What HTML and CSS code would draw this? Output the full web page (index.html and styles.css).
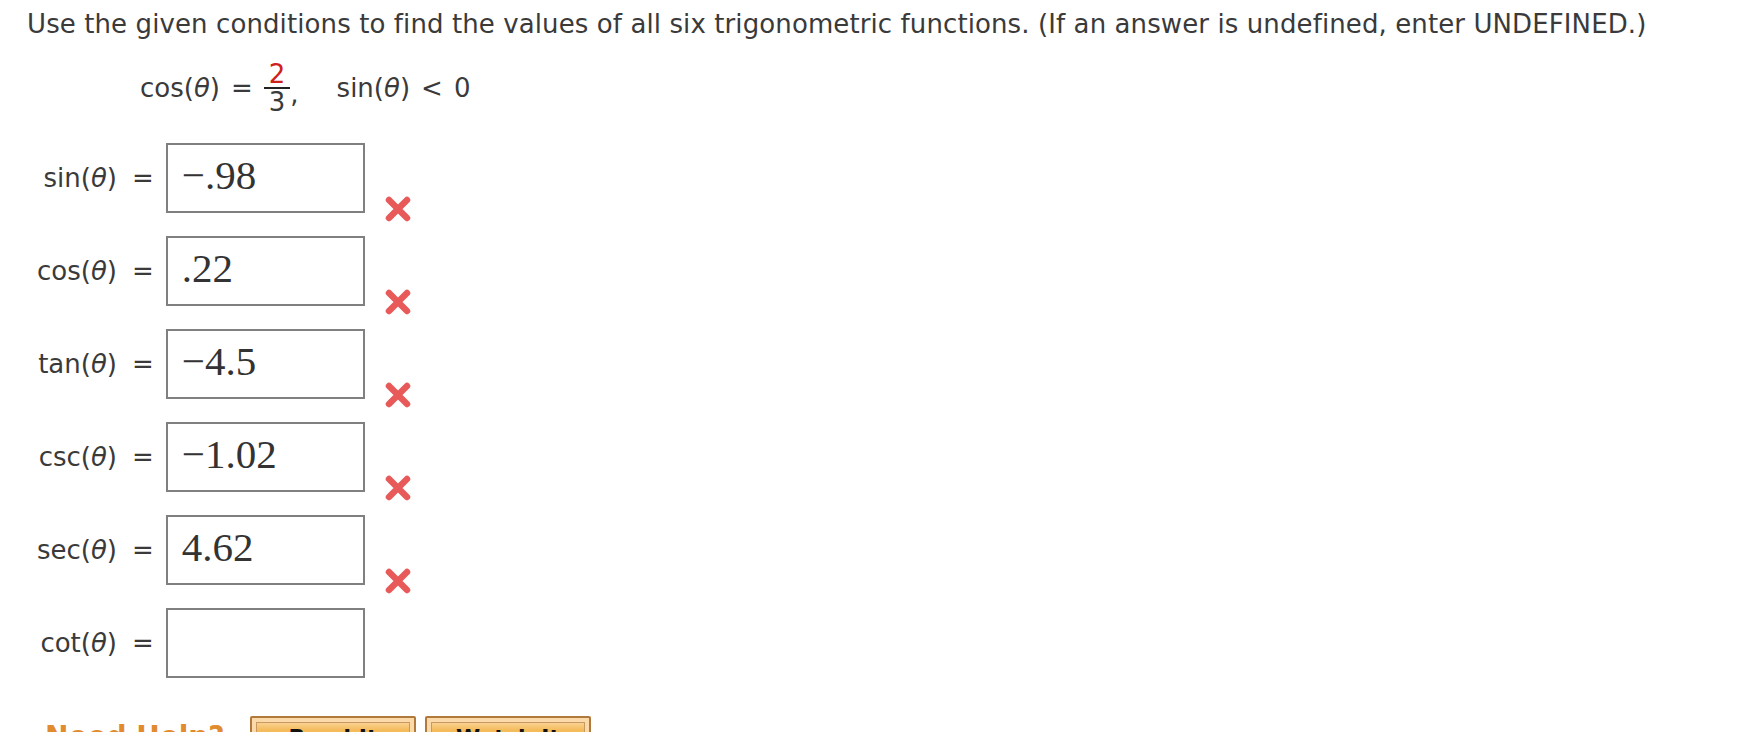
FILE: index.html
```html
<!DOCTYPE html>
<html lang="en">
<head>
    <meta charset="UTF-8">
    <title>Trig Functions</title>
    <link rel="stylesheet" href="styles.css">
</head>
<body>
    <div class="question">
        <p class="prompt">Use the given conditions to find the values of all six trigonometric functions. (If an answer is undefined, enter UNDEFINED.)</p>

        <div class="given">
            <span>cos(<i>θ</i>)</span>
            <span class="op">=</span>
            <span class="frac"><span class="num">2</span><span class="den">3</span></span><span class="comma">,</span>
            <span class="second">sin(<i>θ</i>)</span>
            <span class="op">&lt;</span>
            <span>0</span>
        </div>

        <div class="answers">
            <div class="row">
                <span class="label">sin(<i>θ</i>)</span>
                <span class="eq">=</span>
                <div class="box">−.98</div>
                <svg class="wrong" viewBox="0 0 28 26"><path d="M5 4 L23 22 M23 4 L5 22"/></svg>
            </div>
            <div class="row">
                <span class="label">cos(<i>θ</i>)</span>
                <span class="eq">=</span>
                <div class="box">.22</div>
                <svg class="wrong" viewBox="0 0 28 26"><path d="M5 4 L23 22 M23 4 L5 22"/></svg>
            </div>
            <div class="row">
                <span class="label">tan(<i>θ</i>)</span>
                <span class="eq">=</span>
                <div class="box">−4.5</div>
                <svg class="wrong" viewBox="0 0 28 26"><path d="M5 4 L23 22 M23 4 L5 22"/></svg>
            </div>
            <div class="row">
                <span class="label">csc(<i>θ</i>)</span>
                <span class="eq">=</span>
                <div class="box">−1.02</div>
                <svg class="wrong" viewBox="0 0 28 26"><path d="M5 4 L23 22 M23 4 L5 22"/></svg>
            </div>
            <div class="row">
                <span class="label">sec(<i>θ</i>)</span>
                <span class="eq">=</span>
                <div class="box">4.62</div>
                <svg class="wrong" viewBox="0 0 28 26"><path d="M5 4 L23 22 M23 4 L5 22"/></svg>
            </div>
            <div class="row">
                <span class="label">cot(<i>θ</i>)</span>
                <span class="eq">=</span>
                <div class="box"></div>
            </div>
        </div>

        <div class="help">
            <span class="need">Need Help?</span>
            <button class="help-btn">Read It</button>
            <button class="help-btn">Watch It</button>
        </div>
    </div>
</body>
</html>
```

FILE: styles.css
```css
body {
    margin: 0;
    background: #fff;
    color: #3a3a3a;
    font-family: "DejaVu Sans", Verdana, sans-serif;
    font-size: 26px;
    overflow: hidden;
}
.question {
    padding-left: 27px;
}
.prompt {
    margin: 0;
    padding-top: 8px;
    line-height: 32px;
    letter-spacing: 0.1px;
}
.given {
    display: flex;
    align-items: center;
    margin-top: 20px;
    margin-left: 113px;
    height: 56px;
}
.given i, .label i {
    font-style: italic;
}
.op {
    margin: 0 11px;
}
.frac {
    display: inline-flex;
    flex-direction: column;
    align-items: center;
    font-size: 26px;
    line-height: 23px;
}
.frac .num {
    color: #d0201a;
    padding: 0 5px 1px;
    border-bottom: 2px solid #222;
}
.frac .den {
    padding-top: 2px;
}
.comma {
    align-self: center;
    margin-top: 12px;
}
.second {
    margin-left: 38px;
}
.answers {
    margin-top: 27px;
    display: flex;
    flex-direction: column;
    gap: 23px;
}
.row {
    display: flex;
    align-items: flex-start;
    height: 70px;
}
.label {
    width: 90px;
    text-align: right;
    line-height: 70px;
}
.eq {
    margin-left: 15px;
    line-height: 70px;
}
.box {
    margin-left: 12px;
    height: 66px;
    width: 181px;
    padding-left: 14px;
    border: 2px solid #808080;
    font-family: "Liberation Serif", "Times New Roman", serif;
    font-size: 41px;
    line-height: 60px;
    color: #333;
}
.wrong {
    width: 28px;
    height: 26px;
    margin-left: 19px;
    margin-top: 53px;
}
.wrong path {
    stroke: #e85a5a;
    stroke-width: 6.5;
    stroke-linecap: round;
    fill: none;
}
.help {
    display: flex;
    align-items: flex-start;
    margin-top: 38px;
    margin-left: 18px;
}
.need {
    width: 183px;
    white-space: nowrap;
    color: #e28a2e;
    font-weight: bold;
    font-size: 28px;
    margin-top: 4px;
}
.help-btn {
    margin-left: 22px;
    width: 166px;
    height: 44px;
    border: 2px solid #b07a3c;
    border-radius: 2px;
    background: linear-gradient(#fde0b5, #f4bc5c 30%, #f1b24c);
    box-shadow: inset 0 0 0 4px #fbd9a8, inset 0 0 0 5px #c89a62;
    font-family: "DejaVu Sans", Verdana, sans-serif;
    font-weight: bold;
    font-size: 22px;
    color: #111;
    padding: 0 0 2px;
}
.help-btn + .help-btn {
    margin-left: 9px;
}
```
